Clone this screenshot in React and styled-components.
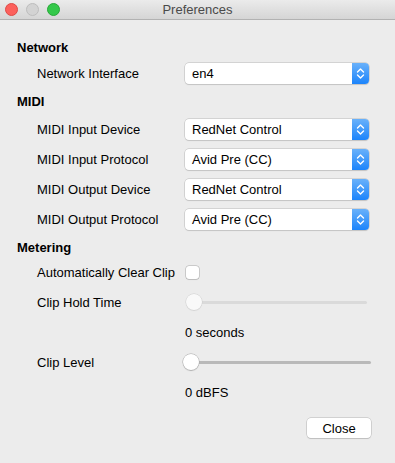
import React from 'react';
import styled, { createGlobalStyle } from 'styled-components';

const GlobalStyle = createGlobalStyle`
  html, body {
    margin: 0;
    padding: 0;
    background: #ececec;
  }
  body {
    font-family: "Liberation Sans", Arial, sans-serif;
    font-size: 13px;
    color: #000;
  }
`

const Window = styled.div`
  width: 395px;
  height: 463px;
  background: #ececec;
  display: flex;
  flex-direction: column;
  overflow: hidden;
`

const TitleBar = styled.div`
  height: 19px;
  border-bottom: 1px solid #b2b2b2;
  background: linear-gradient(#ebebeb, #d5d5d5);
  display: flex;
  align-items: center;
  position: relative;
  padding-left: 5px;
`

const Lights = styled.div`
  display: flex;
  gap: 8px;
`

const Light = styled.span`
  width: 11px;
  height: 11px;
  border-radius: 50%;
  background: ${p => p.$fill};
  border: 0.5px solid ${p => p.$edge};
`

const Title = styled.div`
  position: absolute;
  left: 0;
  right: 0;
  text-align: center;
  color: #4a4a4a;
  font-size: 13px;
  pointer-events: none;
`

const Content = styled.div`
  padding: 20px 0 0 17px;
  display: flex;
  flex-direction: column;
`

const SectionHeader = styled.div`
  font-weight: bold;
  height: 16px;
  line-height: 16px;
  margin: 6px 0 ${p => p.$after ?? 2}px;
  &:first-child {
    margin-top: 0;
  }
`

const Row = styled.div`
  height: 30px;
  display: flex;
  align-items: center;
  padding-left: 20px;
`

const Label = styled.div`
  width: 148px;
  flex-shrink: 0;
`

const Popup = styled.div`
  width: 184px;
  height: 21px;
  box-sizing: border-box;
  display: flex;
  align-items: stretch;
  background: #fff;
  border-radius: 4px;
  box-shadow: 0 0 0 0.5px #b9b9b9, 0 1px 1px rgba(0, 0, 0, 0.12);
  overflow: hidden;
`

const PopupText = styled.div`
  flex: 1;
  padding-left: 7px;
  line-height: 21px;
`

const PopupArrows = styled.div`
  width: 17px;
  background: linear-gradient(#69b1fa, #1c84fb);
  display: flex;
  align-items: center;
  justify-content: center;
`

const Checkbox = styled.div`
  width: 13px;
  height: 13px;
  margin-left: 1px;
  background: #fff;
  border-radius: 3px;
  box-shadow: 0 0 0 0.5px #a8a8a8, 0 1px 1px rgba(0, 0, 0, 0.1);
`

const Slider = styled.div`
  position: relative;
  width: ${p => p.$width}px;
  margin-left: ${p => p.$offset}px;
  height: 17px;
  display: flex;
  align-items: center;
`

const Track = styled.div`
  width: 100%;
  height: 3px;
  border-radius: 2px;
  background: ${p => (p.$disabled ? '#dadada' : '#b9b9b9')};
`

const Thumb = styled.div`
  position: absolute;
  left: 0;
  top: 0;
  width: 16px;
  height: 16px;
  border-radius: 50%;
  background: ${p => (p.$disabled ? '#f9f9f9' : '#fff')};
  box-shadow: 0 0 0 0.5px ${p => (p.$disabled ? '#cfcfcf' : '#a8a8a8')}, 0 1px 1px rgba(0, 0, 0, ${p => (p.$disabled ? 0.08 : 0.2)});
`

const Value = styled.div`
  margin-left: 148px;
`

const Footer = styled.div`
  display: flex;
  justify-content: flex-end;
  padding: 11px 24px 0 0;
`

const Button = styled.button`
  width: 64px;
  height: 20px;
  padding: 0;
  background: #fff;
  border: none;
  border-radius: 4px;
  box-shadow: 0 0 0 0.5px #b5b5b5, 0 1px 1px rgba(0, 0, 0, 0.15);
  font-family: inherit;
  font-size: 13px;
  color: #000;
`

function Arrows() {
  return (
    <svg width="9" height="13" viewBox="0 0 9 13">
      <path d="M1.5 5 L4.5 2 L7.5 5 M1.5 8 L4.5 11 L7.5 8" fill="none" stroke="#fff" strokeWidth="1.4" strokeLinecap="round" strokeLinejoin="round" />
    </svg>
  )
}

function Select({ value }) {
  return (
    <Popup>
      <PopupText>{value}</PopupText>
      <PopupArrows><Arrows /></PopupArrows>
    </Popup>
  )
}

const midiRows = [
  ['MIDI Input Device', 'RedNet Control'],
  ['MIDI Input Protocol', 'Avid Pre (CC)'],
  ['MIDI Output Device', 'RedNet Control'],
  ['MIDI Output Protocol', 'Avid Pre (CC)'],
]

export default function App() {
  return (
    <>
      <GlobalStyle />
      <Window>
        <TitleBar>
          <Lights>
            <Light $fill="#fc605c" $edge="#de4a46" />
            <Light $fill="#d3d3d3" $edge="#bdbdbd" />
            <Light $fill="#34c84a" $edge="#28a838" />
          </Lights>
          <Title>Preferences</Title>
        </TitleBar>
        <Content>
          <SectionHeader>Network</SectionHeader>
          <Row>
            <Label>Network Interface</Label>
            <Select value="en4" />
          </Row>
          <SectionHeader $after={4}>MIDI</SectionHeader>
          {midiRows.map(([label, value]) => (
            <Row key={label}>
              <Label>{label}</Label>
              <Select value={value} />
            </Row>
          ))}
          <SectionHeader $after={1}>Metering</SectionHeader>
          <Row>
            <Label>Automatically Clear Clip</Label>
            <Checkbox />
          </Row>
          <Row>
            <Label>Clip Hold Time</Label>
            <Slider $width={181} $offset={1}>
              <Track $disabled />
              <Thumb $disabled />
            </Slider>
          </Row>
          <Row>
            <Value>0 seconds</Value>
          </Row>
          <Row>
            <Label>Clip Level</Label>
            <Slider $width={188} $offset={-2}>
              <Track />
              <Thumb />
            </Slider>
          </Row>
          <Row>
            <Value>0 dBFS</Value>
          </Row>
        </Content>
        <Footer>
          <Button>Close</Button>
        </Footer>
      </Window>
    </>
  )
}
